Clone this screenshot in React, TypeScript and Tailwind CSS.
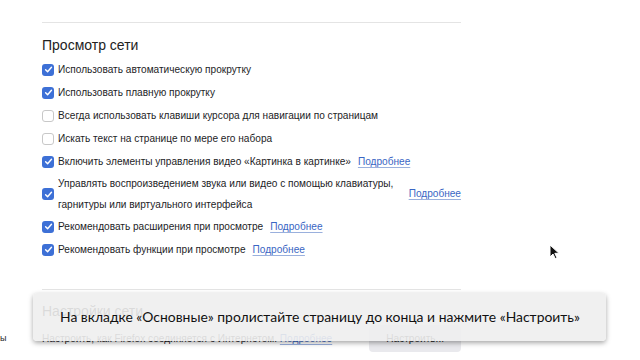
import React from 'react'

const font = { fontFamily: '"Liberation Sans", Arial, sans-serif' }

type Row = {
  label: React.ReactNode
  checked: boolean
  more?: boolean
  twoLine?: boolean
}

const rows: Row[] = [
  { label: 'Использовать автоматическую прокрутку', checked: true },
  { label: 'Использовать плавную прокрутку', checked: true },
  { label: 'Всегда использовать клавиши курсора для навигации по страницам', checked: false },
  { label: 'Искать текст на странице по мере его набора', checked: false },
  { label: 'Включить элементы управления видео «Картинка в картинке»', checked: true, more: true },
  {
    label: (
      <>
        Управлять воспроизведением звука или видео с помощью клавиатуры,
        <br />
        гарнитуры или виртуального интерфейса
      </>
    ),
    checked: true,
    more: true,
    twoLine: true,
  },
  { label: 'Рекомендовать расширения при просмотре', checked: true, more: true },
  { label: 'Рекомендовать функции при просмотре', checked: true, more: true },
]

const Checkbox: React.FC<{ checked: boolean }> = ({ checked }) =>
  checked ? (
    <span className="flex h-[12px] w-[12px] shrink-0 items-center justify-center rounded-[3px] bg-[#3d70d6]">
      <svg width="9" height="9" viewBox="0 0 10 10">
        <path d="M1.8 5.2 L4 7.4 L8.3 2.6" fill="none" stroke="white" strokeWidth="1.6" strokeLinecap="round" strokeLinejoin="round" />
      </svg>
    </span>
  ) : (
    <span className="h-[12px] w-[12px] shrink-0 rounded-[3px] border border-[#c8c8c8] bg-white" />
  )

const More: React.FC = () => (
  <a className="text-[#3a66c4] underline decoration-[#9ab0dd] underline-offset-2">Подробнее</a>
)

export default function App() {
  return (
    <div className="relative h-[360px] w-[640px] overflow-hidden bg-white text-[#1d1d1f]" style={font}>
      <div className="flex w-[461px] flex-col pl-[42px] pt-[22px]">
        <div className="h-px bg-[#e4e4e4]" />
        <h2 className="mt-[12px] text-[14px] leading-[20px] text-[#222]">Просмотр сети</h2>
        <div className="mt-[3px] flex flex-col whitespace-nowrap text-[10.1px]">
          {rows.map((r, i) =>
            r.twoLine ? (
              <div key={i} className="flex items-center justify-between">
                <div className="flex items-center gap-[4px]">
                  <Checkbox checked={r.checked} />
                  <span className="leading-[21px]">{r.label}</span>
                </div>
                <More />
              </div>
            ) : (
              <div key={i} className="flex h-[23px] items-center gap-[4px]">
                <Checkbox checked={r.checked} />
                <span>{r.label}</span>
                {r.more && (
                  <span className="ml-[3px]">
                    <More />
                  </span>
                )}
              </div>
            )
          )}
        </div>
        <div className="mt-[28px] h-px bg-[#e4e4e4]" />
        <h2 className="mt-[11px] text-[14px] leading-[20px] text-[#222]">Настройки сети</h2>
        <div className="mt-[4px] flex items-center justify-between whitespace-nowrap text-[10.1px]">
          <span>
            Настроить, как Firefox соединяется с Интернетом. <More />
          </span>
          <span className="rounded-[4px] bg-[#e9e9ed] px-[17px] py-[6px]">Настроить...</span>
        </div>
      </div>

      <span className="absolute left-0 top-[332px] text-[9px]">ы</span>

      <div className="absolute left-[33px] top-[293px] flex h-[48px] w-[573px] items-center rounded-[4px] bg-[#eeeeee]/90 pl-[27px] shadow-[0_2px_5px_rgba(0,0,0,0.35)]">
        <span className="whitespace-nowrap text-[13.9px] text-[#111]" style={{ fontFamily: 'Lato, sans-serif' }}>
          На вкладке «Основные» пролистайте страницу до конца и нажмите «Настроить»
        </span>
      </div>

      <svg className="absolute left-[549px] top-[244px]" width="11" height="16" viewBox="0 0 11 16">
        <path d="M1 1 L1 13 L4 10 L6.2 14.6 L8 13.8 L5.8 9.3 L10 9.3 Z" fill="#111" stroke="white" strokeWidth="1" />
      </svg>
    </div>
  )
}
